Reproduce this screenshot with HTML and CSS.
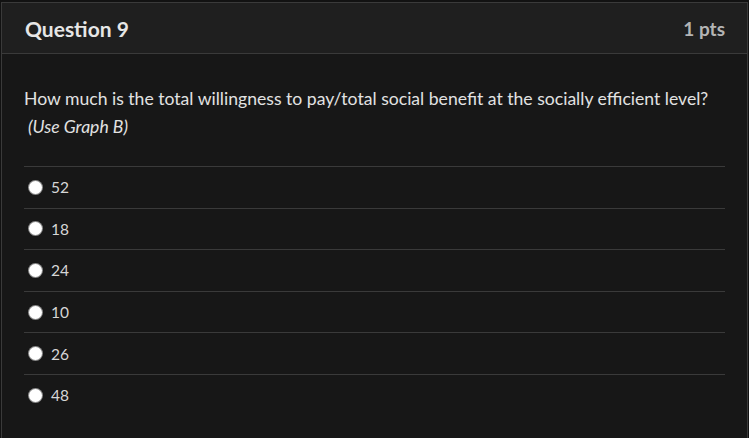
FILE: index.html
```html
<!DOCTYPE html>
<html>
<head>
<meta charset="utf-8">
<link rel="stylesheet" href="styles.css">
</head>
<body>
<div class="card">
  <div class="header">
    <span class="title">Question 9</span>
    <span class="pts">1 pts</span>
  </div>
  <div class="content">
    <p class="question">How much is the total willingness to pay/total social benefit at the socially efficient level?<br><em class="hint">(Use Graph B)</em></p>
    <ul class="answers">
      <li class="answer"><span class="radio"></span><span class="label">52</span></li>
      <li class="answer"><span class="radio"></span><span class="label">18</span></li>
      <li class="answer"><span class="radio"></span><span class="label">24</span></li>
      <li class="answer"><span class="radio"></span><span class="label">10</span></li>
      <li class="answer"><span class="radio"></span><span class="label">26</span></li>
      <li class="answer"><span class="radio"></span><span class="label">48</span></li>
    </ul>
  </div>
</div>
</body>
</html>
```
FILE: styles.css
```css
html, body {
  margin: 0;
  padding: 0;
  background: #121212;
  height: 100%;
  overflow: hidden;
}
body {
  font-family: Lato, "Liberation Sans", sans-serif;
  padding: 2px 1px 0 1px;
  box-sizing: border-box;
}
.card {
  border: 1px solid #3a3a3a;
  border-bottom: none;
  background: #171717;
  height: 100%;
}
.header {
  height: 51px;
  box-sizing: border-box;
  background: #1f1f1f;
  border-bottom: 1px solid #3a3a3a;
  display: flex;
  align-items: center;
  justify-content: space-between;
  padding: 0 22px 0 23px;
}
.title {
  font-size: 21px;
  font-weight: 700;
  color: #e6e6e6;
}
.pts {
  font-size: 19px;
  font-weight: 700;
  color: #b4b4b4;
}
.content {
  padding: 31px 22px 0 22px;
}
.question {
  margin: 0;
  font-size: 17.6px;
  line-height: 28px;
  color: #e2e2e2;
}
.hint {
  display: inline-block;
  margin-left: 4px;
  font-size: 17.6px;
}
.answers {
  list-style: none;
  margin: 25px 0 0 0;
  padding: 0;
}
.answer {
  box-sizing: border-box;
  border-top: 1px solid #3a3a3a;
  height: 41.6px;
  display: flex;
  align-items: center;
  padding-left: 5px;
}
.radio {
  width: 13px;
  height: 13px;
  border-radius: 50%;
  background: #ffffff;
  box-shadow: 0 0 0 1px #8a8a8a;
  margin-right: 9px;
}
.label {
  font-size: 15.5px;
  color: #d6d6d6;
}
```
